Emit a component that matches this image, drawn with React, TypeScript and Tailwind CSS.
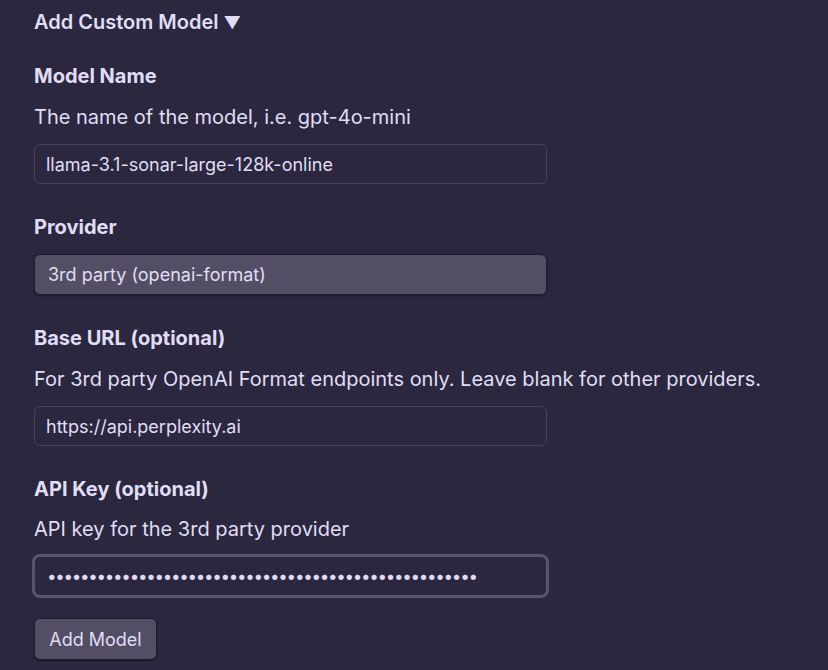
import React from "react";

const font = { fontFamily: "Inter, 'Noto Sans', 'Liberation Sans', sans-serif" };

function Label({ children }: { children: React.ReactNode }) {
  return <div className="text-[20px] font-bold leading-[28px]">{children}</div>;
}

function Desc({ children }: { children: React.ReactNode }) {
  return <div className="text-[20px] leading-[28px]">{children}</div>;
}

export default function App() {
  return (
    <div className="min-h-[670px] w-full bg-[#2a273f] text-[#e0def4]" style={font}>
      <div className="flex flex-col px-[34px] pt-[8px]">
        <div className="text-[20px] font-semibold leading-[28px]">
          Add Custom Model <span className="text-[17px]">▼</span>
        </div>

        <div className="mt-[25px] flex flex-col gap-[29px]">
          <div className="flex flex-col gap-[13px]">
            <Label>Model Name</Label>
            <Desc>The name of the model, i.e. gpt-4o-mini</Desc>
            <input
              readOnly
              value="llama-3.1-sonar-large-128k-online"
              className="h-[40px] w-[513px] rounded-md border border-[#45425a] bg-transparent px-[11px] text-[18px] outline-none"
            />
          </div>

          <div className="flex flex-col gap-[13px]">
            <Label>Provider</Label>
            <div className="flex h-[41px] w-[513px] items-center rounded-md border border-[#1e1c2c] bg-[#534e63] px-[13px] text-[18px] shadow-[0_1px_2px_rgba(0,0,0,0.4)]">
              3rd party (openai-format)
            </div>
          </div>

          <div className="flex flex-col gap-[13px]">
            <Label>Base URL (optional)</Label>
            <Desc>For 3rd party OpenAI Format endpoints only. Leave blank for other providers.</Desc>
            <input
              readOnly
              value="https://api.perplexity.ai"
              className="h-[40px] w-[513px] rounded-md border border-[#45425a] bg-transparent px-[11px] text-[18px] outline-none"
            />
          </div>

          <div className="flex flex-col">
            <Label>API Key (optional)</Label>
            <div className="mt-[12px]">
              <Desc>API key for the 3rd party provider</Desc>
            </div>
            <input
              readOnly
              type="password"
              value={"x".repeat(52)}
              className="-ml-[2px] mt-[11px] h-[44px] w-[517px] rounded-lg border-[3px] border-[#575369] bg-transparent px-[12px] text-[17px] tracking-[-1.3px] outline-none"
            />
            <button className="mt-[20px] h-[42px] w-[123px] rounded-md border border-[#1e1c2c] bg-[#534e63] text-[18px] text-[#e0def4] shadow-[0_1px_2px_rgba(0,0,0,0.4)]">
              Add Model
            </button>
          </div>
        </div>
      </div>
    </div>
  );
}
